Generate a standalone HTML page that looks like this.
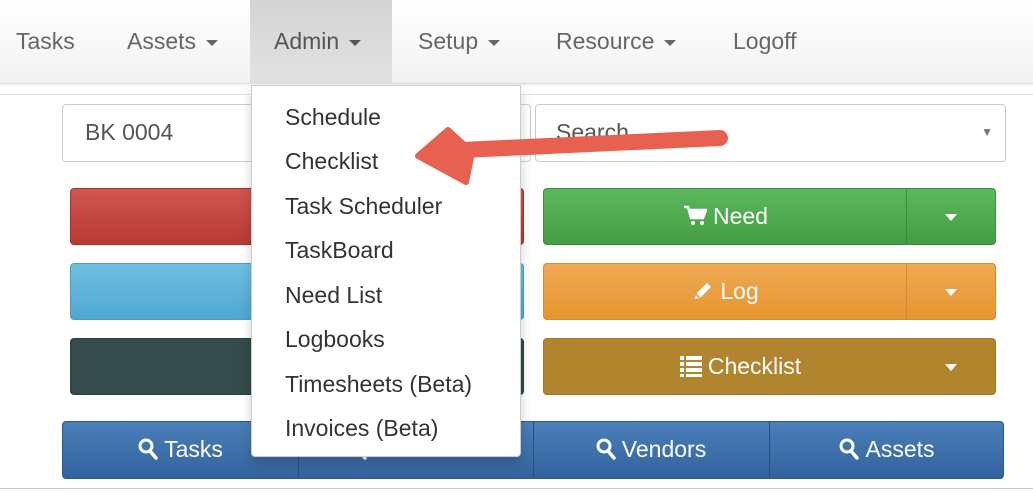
<!DOCTYPE html>
<html><head><style>
*{margin:0;padding:0;box-sizing:border-box}
body{width:1033px;height:493px;overflow:hidden;background:#fff;font-family:"Liberation Sans",sans-serif;position:relative}
.nav{position:absolute;left:0;top:0;width:1033px;height:84px;background:linear-gradient(#fff,#f2f2f2);border-bottom:1px solid #ddd;box-shadow:0 1px 3px rgba(0,0,0,.08)}
.nav span{position:absolute;top:28px;font-size:23px;color:#666}
.car{display:inline-block;width:0;height:0;border-left:6px solid transparent;border-right:6px solid transparent;border-top:6px solid #666;vertical-align:middle;margin-left:10px}
.active{position:absolute;left:250px;top:0;width:142px;height:84px;background:linear-gradient(#d4d4d4,#e2e2e2)}
.line{position:absolute;left:0;top:94px;width:1033px;height:1px;background:#e5e5e5}
.inp{position:absolute;border:1px solid #ccc;border-radius:4px;background:#fff;font-size:23px;color:#555;padding:14px 0 0 22px}
.b{position:absolute;border-radius:4px;color:#fff;font-size:23px;text-align:center;line-height:55px}
.dd{position:absolute;left:251px;top:85px;width:270px;height:372px;background:#fff;border:1px solid #ccc;border-radius:0 0 4px 4px;box-shadow:0 6px 12px rgba(0,0,0,.18)}
.dd div{position:absolute;left:33px;font-size:23px;color:#333}
.w{display:inline-block;width:0;height:0;border-left:6px solid transparent;border-right:6px solid transparent;border-top:7px solid #fff;vertical-align:middle}
svg.i{vertical-align:-3px;margin-right:6px}
</style></head><body>
<div class="nav">
<div class="active"></div>
<span style="left:16px">Tasks</span>
<span style="left:127px">Assets<i class="car"></i></span>
<span style="left:274px;color:#555">Admin<i class="car" style="border-top-color:#555"></i></span>
<span style="left:418px">Setup<i class="car"></i></span>
<span style="left:556px">Resource<i class="car"></i></span>
<span style="left:733px">Logoff</span>
</div>
<div class="line"></div>
<div class="inp" style="left:62px;top:104px;width:469px;height:58px">BK 0004</div>
<div class="inp" style="left:535px;top:104px;width:471px;height:58px;padding-left:20px">Search<span style="position:absolute;right:12px;top:20px;font-size:12px;color:#777">▼</span></div>

<div class="b" style="left:70px;top:188px;width:454px;height:57px;background:linear-gradient(#d0564f,#b83a33);border:1px solid #a8322c"></div>
<div class="b" style="left:543px;top:188px;width:453px;height:57px;background:linear-gradient(#5cb85c,#449d44);border:1px solid #3e8f3e"><span style="position:absolute;left:0;width:363px"><svg class="i" width="24" height="22" viewBox="0 0 24 22"><path d="M1 2h4l3 11h12l3-8H7" fill="none" stroke="#fff" stroke-width="2.5"/><path d="M7 5h16l-3 8H9z" fill="#fff"/><circle cx="10" cy="18" r="2" fill="#fff"/><circle cx="19" cy="18" r="2" fill="#fff"/></svg>Need</span><span style="position:absolute;left:362px;top:0;width:1px;height:55px;background:#3a8a3a"></span><span style="position:absolute;left:363px;width:88px"><i class="w"></i></span></div>

<div class="b" style="left:70px;top:263px;width:454px;height:57px;background:linear-gradient(#70c0e0,#4fa8d4);border:1px solid #46a0cc"></div>
<div class="b" style="left:543px;top:263px;width:453px;height:57px;background:linear-gradient(#eeaa55,#e6952e);border:1px solid #d98a2a"><span style="position:absolute;left:0;width:363px"><svg class="i" width="22" height="22" viewBox="0 0 22 22"><path d="M3 19l1-5L15 3l4 4L8 18z" fill="#fff"/><path d="M4 14l4 4" stroke="#e6952e" stroke-width="1.5"/></svg>Log</span><span style="position:absolute;left:362px;top:0;width:1px;height:55px;background:#d08a30"></span><span style="position:absolute;left:363px;width:88px"><i class="w"></i></span></div>

<div class="b" style="left:70px;top:338px;width:454px;height:57px;background:#354c4c;border:1px solid #2c4040"></div>
<div class="b" style="left:543px;top:338px;width:453px;height:57px;background:#b0852e;border:1px solid #a07a28"><span style="position:absolute;left:0;width:393px"><svg class="i" width="22" height="22" viewBox="0 0 22 22" fill="#fff"><rect x="0" y="1" width="4" height="4"/><rect x="6" y="1" width="16" height="4"/><rect x="0" y="7" width="4" height="4"/><rect x="6" y="7" width="16" height="4"/><rect x="0" y="13" width="4" height="4"/><rect x="6" y="13" width="16" height="4"/><rect x="0" y="19" width="4" height="3"/><rect x="6" y="19" width="16" height="3"/></svg>Checklist</span><span style="position:absolute;left:363px;width:88px"><i class="w"></i></span></div>

<div class="b" style="left:62px;top:421px;width:942px;height:58px;background:linear-gradient(#4a7fb8,#33639e);border:1px solid #2c5a8e">
<span style="position:absolute;left:0;width:235px"><svg class="i" width="20" height="22" viewBox="0 0 20 22"><circle cx="8" cy="8" r="6" fill="none" stroke="#fff" stroke-width="3"/><path d="M12 13l6 7" stroke="#fff" stroke-width="3.5" stroke-linecap="round"/></svg>Tasks</span>
<span style="position:absolute;left:235px;top:0;width:1px;height:56px;background:#28507f"></span>
<span style="position:absolute;left:235px;width:235px"><svg class="i" width="20" height="22" viewBox="0 0 20 22"><circle cx="8" cy="8" r="6" fill="none" stroke="#fff" stroke-width="3"/><path d="M12 13l6 7" stroke="#fff" stroke-width="3.5" stroke-linecap="round"/></svg>Reminders</span>
<span style="position:absolute;left:470px;top:0;width:1px;height:56px;background:#28507f"></span>
<span style="position:absolute;left:470px;width:236px"><svg class="i" width="20" height="22" viewBox="0 0 20 22"><circle cx="8" cy="8" r="6" fill="none" stroke="#fff" stroke-width="3"/><path d="M12 13l6 7" stroke="#fff" stroke-width="3.5" stroke-linecap="round"/></svg>Vendors</span>
<span style="position:absolute;left:706px;top:0;width:1px;height:56px;background:#28507f"></span>
<span style="position:absolute;left:706px;width:236px"><svg class="i" width="20" height="22" viewBox="0 0 20 22"><circle cx="8" cy="8" r="6" fill="none" stroke="#fff" stroke-width="3"/><path d="M12 13l6 7" stroke="#fff" stroke-width="3.5" stroke-linecap="round"/></svg>Assets</span>
</div>
<div style="position:absolute;left:0;top:488px;width:1033px;height:5px;border-top:1px solid #ccc"></div>

<div class="dd">
<div style="top:18px">Schedule</div>
<div style="top:62px">Checklist</div>
<div style="top:107px">Task Scheduler</div>
<div style="top:151px">TaskBoard</div>
<div style="top:196px">Need List</div>
<div style="top:240px">Logbooks</div>
<div style="top:285px">Timesheets (Beta)</div>
<div style="top:329px">Invoices (Beta)</div>
</div>

<svg style="position:absolute;left:0;top:0" width="1033" height="493">
<path d="M720 138 L462 150" stroke="#e8604f" stroke-width="16" stroke-linecap="round"/>
<polygon points="418,156 448,130 472,152 466,182" fill="#e8604f" stroke="#e8604f" stroke-width="6" stroke-linejoin="round"/>
</svg>
</body></html>
